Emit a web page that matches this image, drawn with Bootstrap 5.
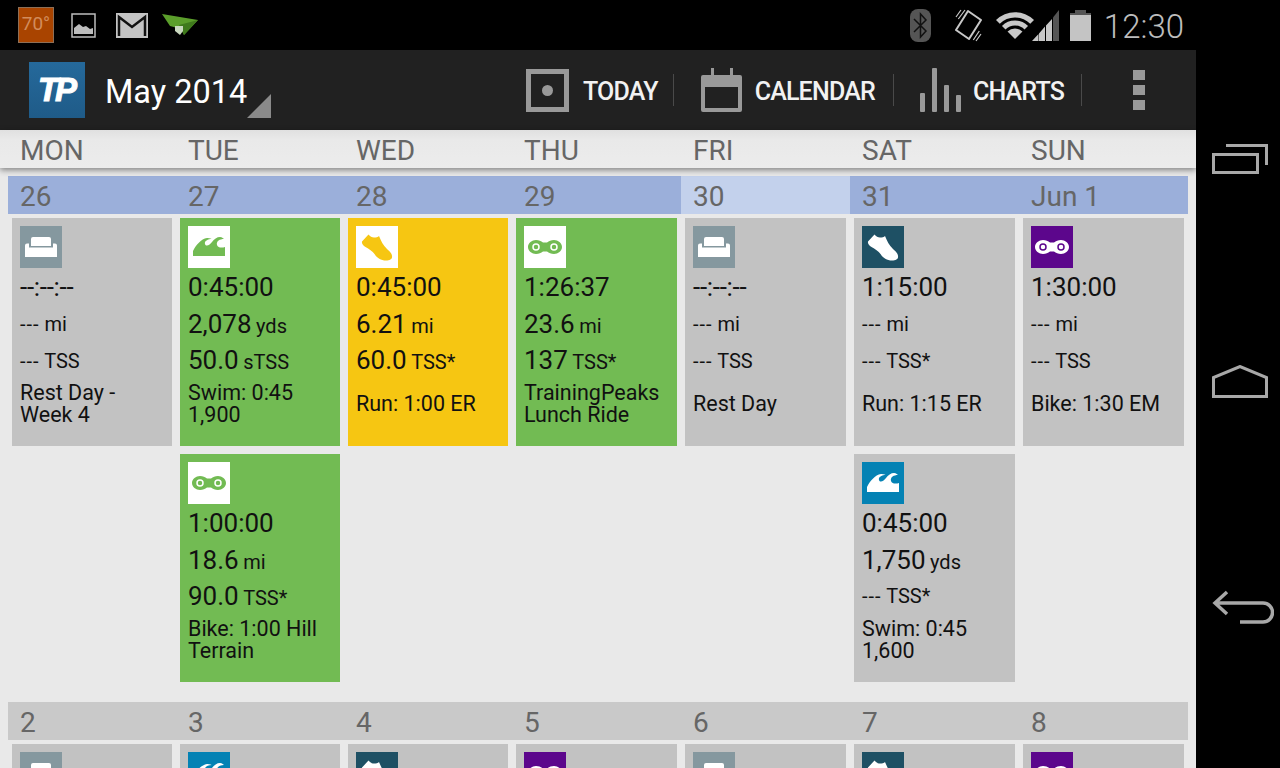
<!doctype html>
<html lang="en"><head><meta charset="utf-8"><title>TrainingPeaks calendar</title>
<link href="https://cdn.jsdelivr.net/npm/bootstrap@5.3.0/dist/css/bootstrap.min.css" rel="stylesheet">
<style>
html,body{height:768px;overflow:hidden;background:#000}
body{font-family:Roboto,"Liberation Sans",sans-serif;width:1280px}
.app-shell{height:768px}
.app-main{width:1196px}
.nav-rail{width:84px}
.nav-rail svg{display:block;margin-left:16px}
.status-bar{height:50px;background:#000;padding-left:18px}
.status-bar svg{display:block;flex:none}
.temp-box{width:36px;height:36px;background:#a94400;border:1px solid #8d6f57;color:#d28c5c;font-size:19px;line-height:32px;text-align:center;margin-right:17px;margin-top:-1px}
.gmail-ico{margin-left:20px}
.plane-ico{margin-left:14px}
.rotate-ico{margin-left:23px}
.wifi-ico{margin-left:14px}
.signal-ico{margin-left:-2px}
.batt-ico{margin-left:11px}
.clock{font-weight:300;font-size:33px;color:#bdbdbd;margin-left:13px;margin-right:12px;line-height:50px;padding-top:4px}
.action-bar{height:80px;background:#212121;padding-left:29px}
.tp-logo{width:56px;height:56px;background:linear-gradient(#25699b,#1f5b88);color:#fff;font:italic 700 33px/56px "Liberation Sans",sans-serif;letter-spacing:-3px;text-align:center;padding-right:2px;-webkit-text-stroke:1px #fff}
.month-pick{position:relative;color:#fff;font-size:32.500px;line-height:58px;margin-left:20px;margin-top:4px;width:166px}
.month-tri{position:absolute;left:142px;top:31px;width:24px;height:24px;background:#8a8a8a;clip-path:polygon(100% 0,100% 100%,0 100%)}
.act-item{height:80px;color:#f2f2f2;font-size:25px;font-weight:500;letter-spacing:-.8px}
.act-item svg{flex:none}
.act-item span{padding-top:4px}
.act-today span{margin-left:14px}
.act-cal span{margin-left:13px}
.act-chart span{margin-left:11px}
.act-sep{width:1px;height:32px;background:#4a4a4a}
.sep-today{margin-left:15px}
.sep-cal{margin-left:18px}
.sep-chart{margin-left:17px}
.act-cal{margin-left:27px}
.act-chart{margin-left:26px}
.dots-ico{margin-left:51px;margin-right:51px}
.day-head{height:38px;background:linear-gradient(#e0e0e0,#e9e9e9 25%,#ececec);position:relative;z-index:2;box-shadow:0 2px 6px rgba(0,0,0,.45);padding:0 8px}
.wk-cols{grid-template-columns:168px 168px 168px 169px 169px 169px 169px}
.day-head>div{font-size:28px;line-height:42px;color:#666;padding-left:12px}
.cal-body{background:#e9e9e9;padding:8px 8px 0;flex:1;overflow:hidden}
.wk-band>div{height:38px;font-size:28px;line-height:41px;color:#666;padding-left:12px}
.band-blue{background:#9bafda}
.band-today{background:#c3d1ec}
.band-grey{background:#c9c9c9}
.wk-gap{height:16px}
.day-cell{padding:4px}
.wo-card{height:228px;padding:8px;color:#111;overflow:hidden}
.wo-rest,.wo-plan{background:#c2c2c2}
.wo-green{background:#72bb53}
.wo-yellow{background:#f6c612}
.wo-ico{width:42px;height:42px;display:block}
.ic-slate{background:#85989f;color:#fff;--hole:#85989f}
.ic-teal{background:#1e5064;color:#fff;--hole:#1e5064}
.ic-purple{background:#5c068c;color:#fff;--hole:#5c068c}
.ic-blue{background:#0482b4;color:#fff;--hole:#0482b4}
.ic-on-green{background:#fff;color:#72bb53;--hole:#fff}
.ic-on-yellow{background:#fff;color:#f6c612;--hole:#fff}
.wo-time{font-size:26px;line-height:36px;height:37px;margin-top:1px}
.time-empty{letter-spacing:-.3px}
.wo-num{font-size:26px;line-height:36px;height:36px}
.wo-num small{font-size:20px;margin-left:-2px}
.wo-blank{font-size:20px;line-height:36px;height:36px}
.wo-blank+.wo-blank{padding-top:1px}
.dash-run{letter-spacing:1px}
.wo-note{font-size:21.500px;line-height:22px;height:44px;margin-top:4px;display:flex;align-items:center}
.rail-recent{margin-top:144px}
.rail-home{margin-top:191px}
.rail-back{margin-top:192px}
</style></head><body>
<svg width="0" height="0" class="d-none"><defs>
<symbol id="i-bed" viewBox="0 0 42 42"><path fill="currentColor" d="M11 13q0-2 2-2h16q2 0 2 2v7H11zM5 19.500q0-2 2-2h2v4h24v-4h2q2 0 2 2V31H5z"/></symbol>
<symbol id="i-wave" viewBox="0 0 42 42"><path fill="currentColor" d="M5 30V25C8 19 13 13 19 12 21 11.700 24 13 24 13 20 13 16 15 17 18 18 21 22 19 24 16 26 13 29 11 32 11 34 11 36 13 36 13 32 13 28 15 29 19 30 22 34 22 37 21V30Z"/></symbol>
<symbol id="i-shoe" viewBox="0 0 42 42"><path fill="currentColor" d="M6 15.500 12.500 8.500C14 10.500 16 11.500 18 11.500 20 11.500 22 11 23 10 25 15 27 19 31 23 33 25 36 27 36 30 36.500 33 34 34.500 30 34.500 25 34.500 21 32 18.500 28 16.500 25 13 23 9.500 21 7 19.500 5.500 17.500 6 15.500Z"/></symbol>
<symbol id="i-chain" viewBox="0 0 42 42"><path fill="currentColor" d="M12 14C15 14 17 15 19 16.500H23C25 15 27 14 30 14 34 14 38 17 38 21 38 25 34 28 30 28 27 28 25 27 23 25.500H19C17 27 15 28 12 28 8 28 4 25 4 21 4 17 8 14 12 14Z"/><circle cx="12" cy="21" r="3" fill="none" stroke="var(--hole)" stroke-width="1.500"/><circle cx="30" cy="21" r="3" fill="none" stroke="var(--hole)" stroke-width="1.500"/></symbol>
</defs></svg>
<div class="app-shell d-flex">
<div class="app-main d-flex flex-column">
  <div class="status-bar d-flex align-items-center">
    <div class="temp-box">70°</div>
    <svg width="25" height="25" viewBox="0 0 25 25"><rect x="1" y="1" width="23" height="23" fill="none" stroke="#bdbdbd" stroke-width="1.500"/><path fill="#bdbdbd" d="M3 21V15L8 11 12 14 15 13 19 16 22 15V21Z"/></svg>
    <svg class="gmail-ico" width="32" height="25" viewBox="0 0 32 25"><rect width="32" height="25" fill="#c4c4c4"/><path fill="none" stroke="#111" stroke-width="2.500" d="M3 23V4L16 14 29 4V23"/></svg>
    <svg class="plane-ico" width="36" height="22" viewBox="0 0 36 22"><path fill="#5b9e2b" d="M0 0 36 6 22 21 19 15 8 12Z"/><path fill="#3f7a1c" d="M36 6 17 11 22 21Z"/><path fill="#c9d8bf" d="M13 12h8v5l-3 4-5-4z"/></svg>
    <div class="flex-grow-1"></div>
    <svg width="21" height="33" viewBox="0 0 21 33"><rect width="21" height="33" rx="8" fill="#555"/><path fill="none" stroke="#111" stroke-width="1.500" d="M4 10 16 22 10.500 28V5L16 11 4 23"/></svg>
    <svg class="rotate-ico" width="28" height="34" viewBox="0 0 28 34"><path fill="none" stroke="#c8c8c8" stroke-width="2" stroke-linejoin="round" d="M14 3 27 12 15 31 2 22Z"/><path fill="none" stroke="#c8c8c8" stroke-width="1.200" d="M4.300 11 11 2M2 9 7 2M19.300 32 25.300 23M22 33 27 26"/></svg>
    <svg class="wifi-ico" width="38" height="29" viewBox="0 0 38 29"><path fill="#c8c8c8" d="M19 28 0 9A26.900 26.900 0 0 1 38 9Z"/><circle cx="19" cy="28" r="20" fill="none" stroke="#000" stroke-width="3"/><circle cx="19" cy="28" r="12" fill="none" stroke="#000" stroke-width="3"/></svg>
    <svg class="signal-ico" width="27" height="31" viewBox="0 0 27 31"><path fill="#c8c8c8" d="M0 31 6.500 24V31ZM7 23.500 13 16.500V31H7ZM14 15.500 20 9V31H14Z"/><path fill="#555" d="M21 7.500 27 0V31H21Z"/></svg>
    <svg class="batt-ico" width="21" height="31" viewBox="0 0 21 31"><path fill="#555" d="M5 0H16V3H21V5H0V3H5Z"/><path fill="#c4c4c4" d="M0 5H21V31H0Z"/></svg>
    <div class="clock">12:30</div>
  </div>
  <div class="action-bar d-flex align-items-center position-relative">
    <div class="tp-logo">TP</div>
    <div class="month-pick">May 2014<span class="month-tri"></span></div>
    <div class="flex-grow-1"></div>
    <div class="act-item act-today d-flex align-items-center">
      <svg width="43" height="43" viewBox="0 0 43 43"><rect x="2.500" y="2.500" width="38" height="38" fill="none" stroke="#999" stroke-width="5"/><circle cx="21.500" cy="21.500" r="5.500" fill="#999"/></svg>
      <span>TODAY</span>
    </div>
    <div class="act-sep sep-today"></div>
    <div class="act-item act-cal d-flex align-items-center">
      <svg width="41" height="44" viewBox="0 0 41 44"><path fill="#999" d="M0 9q0-2 2-2H10V0H13V7H29V0H32V7H39q2 0 2 2V42q0 2-2 2H2q-2 0-2-2ZM4 19V40H37V19Z"/></svg>
      <span>CALENDAR</span>
    </div>
    <div class="act-sep sep-cal"></div>
    <div class="act-item act-chart d-flex align-items-center">
      <svg width="42" height="44" viewBox="0 0 42 44"><g fill="#999"><rect y="25" width="5" height="19" rx="1"/><rect x="12" width="5" height="44" rx="1"/><rect x="24" y="17" width="5" height="27" rx="1"/><rect x="36" y="27" width="5" height="17" rx="1"/></g></svg>
      <span>CHARTS</span>
    </div>
    <div class="act-sep sep-chart"></div>
    <svg class="dots-ico" width="12" height="40" viewBox="0 0 12 40"><g fill="#999"><rect width="12" height="10"/><rect y="15" width="12" height="10"/><rect y="30" width="12" height="10"/></g></svg>
  </div>
  <div class="day-head d-grid wk-cols">
    <div>MON</div><div>TUE</div><div>WED</div><div>THU</div><div>FRI</div><div>SAT</div><div>SUN</div>
  </div>
  <div class="cal-body">
    <div class="wk-band d-grid wk-cols"><div class="band-blue">26</div><div class="band-blue">27</div><div class="band-blue">28</div><div class="band-blue">29</div><div class="band-today">30</div><div class="band-blue">31</div><div class="band-blue">Jun 1</div></div>
    <div class="d-grid wk-cols">
      <div class="day-cell"><div class="wo-card wo-rest"><svg class="wo-ico ic-slate"><use href="#i-bed"/></svg><div class="wo-time time-empty">--:--:--</div><div class="wo-blank"><span class="dash-run">---</span> mi</div><div class="wo-blank"><span class="dash-run">---</span> TSS</div><div class="wo-note"><span>Rest Day - Week 4</span></div></div></div>
      <div class="day-cell"><div class="wo-card wo-green"><svg class="wo-ico ic-on-green"><use href="#i-wave"/></svg><div class="wo-time">0:45:00</div><div class="wo-num">2,078 <small>yds</small></div><div class="wo-num">50.0 <small>sTSS</small></div><div class="wo-note"><span>Swim: 0:45 1,900</span></div></div></div>
      <div class="day-cell"><div class="wo-card wo-yellow"><svg class="wo-ico ic-on-yellow"><use href="#i-shoe"/></svg><div class="wo-time">0:45:00</div><div class="wo-num">6.21 <small>mi</small></div><div class="wo-num">60.0 <small>TSS*</small></div><div class="wo-note"><span>Run: 1:00 ER</span></div></div></div>
      <div class="day-cell"><div class="wo-card wo-green"><svg class="wo-ico ic-on-green"><use href="#i-chain"/></svg><div class="wo-time">1:26:37</div><div class="wo-num">23.6 <small>mi</small></div><div class="wo-num">137 <small>TSS*</small></div><div class="wo-note"><span>TrainingPeaks Lunch Ride</span></div></div></div>
      <div class="day-cell"><div class="wo-card wo-rest"><svg class="wo-ico ic-slate"><use href="#i-bed"/></svg><div class="wo-time time-empty">--:--:--</div><div class="wo-blank"><span class="dash-run">---</span> mi</div><div class="wo-blank"><span class="dash-run">---</span> TSS</div><div class="wo-note"><span>Rest Day</span></div></div></div>
      <div class="day-cell"><div class="wo-card wo-plan"><svg class="wo-ico ic-teal"><use href="#i-shoe"/></svg><div class="wo-time">1:15:00</div><div class="wo-blank"><span class="dash-run">---</span> mi</div><div class="wo-blank"><span class="dash-run">---</span> TSS*</div><div class="wo-note"><span>Run: 1:15 ER</span></div></div></div>
      <div class="day-cell"><div class="wo-card wo-plan"><svg class="wo-ico ic-purple"><use href="#i-chain"/></svg><div class="wo-time">1:30:00</div><div class="wo-blank"><span class="dash-run">---</span> mi</div><div class="wo-blank"><span class="dash-run">---</span> TSS</div><div class="wo-note"><span>Bike: 1:30 EM</span></div></div></div>
    </div>
    <div class="d-grid wk-cols">
      <div class="day-cell"></div>
      <div class="day-cell"><div class="wo-card wo-green"><svg class="wo-ico ic-on-green"><use href="#i-chain"/></svg><div class="wo-time">1:00:00</div><div class="wo-num">18.6 <small>mi</small></div><div class="wo-num">90.0 <small>TSS*</small></div><div class="wo-note"><span>Bike: 1:00 Hill Terrain</span></div></div></div>
      <div class="day-cell"></div><div class="day-cell"></div><div class="day-cell"></div>
      <div class="day-cell"><div class="wo-card wo-plan"><svg class="wo-ico ic-blue"><use href="#i-wave"/></svg><div class="wo-time">0:45:00</div><div class="wo-num">1,750 <small>yds</small></div><div class="wo-blank"><span class="dash-run">---</span> TSS*</div><div class="wo-note"><span>Swim: 0:45 1,600</span></div></div></div>
      <div class="day-cell"></div>
    </div>
    <div class="wk-gap"></div>
    <div class="wk-band d-grid wk-cols"><div class="band-grey">2</div><div class="band-grey">3</div><div class="band-grey">4</div><div class="band-grey">5</div><div class="band-grey">6</div><div class="band-grey">7</div><div class="band-grey">8</div></div>
    <div class="d-grid wk-cols">
      <div class="day-cell"><div class="wo-card wo-rest"><svg class="wo-ico ic-slate"><use href="#i-bed"/></svg></div></div>
      <div class="day-cell"><div class="wo-card wo-plan"><svg class="wo-ico ic-blue"><use href="#i-wave"/></svg></div></div>
      <div class="day-cell"><div class="wo-card wo-plan"><svg class="wo-ico ic-teal"><use href="#i-shoe"/></svg></div></div>
      <div class="day-cell"><div class="wo-card wo-plan"><svg class="wo-ico ic-purple"><use href="#i-chain"/></svg></div></div>
      <div class="day-cell"><div class="wo-card wo-rest"><svg class="wo-ico ic-slate"><use href="#i-bed"/></svg></div></div>
      <div class="day-cell"><div class="wo-card wo-plan"><svg class="wo-ico ic-teal"><use href="#i-shoe"/></svg></div></div>
      <div class="day-cell"><div class="wo-card wo-plan"><svg class="wo-ico ic-purple"><use href="#i-chain"/></svg></div></div>
    </div>
  </div>
</div>
<div class="nav-rail d-flex flex-column">
  <svg class="rail-recent" width="56" height="30" viewBox="0 0 56 30"><g fill="none" stroke="#a8a8a8" stroke-width="3"><rect x="1.500" y="10.500" width="44" height="18"/><path d="M14 1.500H54.500V21"/></g></svg>
  <svg class="rail-home" width="56" height="33" viewBox="0 0 56 33"><path fill="none" stroke="#a8a8a8" stroke-width="3" d="M1.500 31.500V12.500L28 1.500 54.500 12.500V31.500Z"/></svg>
  <svg class="rail-back" width="62" height="34" viewBox="0 0 62 34"><path fill="none" stroke="#a8a8a8" stroke-width="3.500" d="M15 2 3 13 15 24M3 13H51A9.500 9.500 0 0 1 51 32H28"/></svg>
</div>
</div>
</body></html>
